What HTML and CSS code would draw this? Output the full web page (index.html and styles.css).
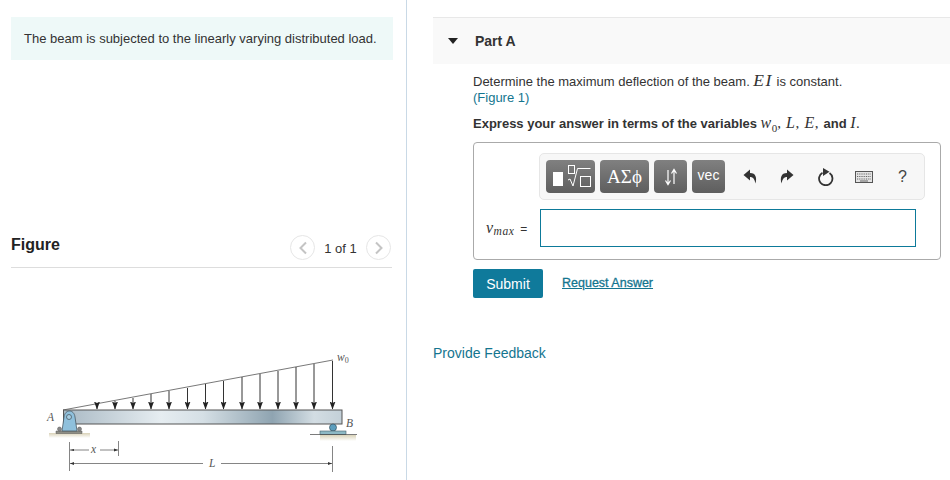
FILE: index.html
```html
<!DOCTYPE html>
<html lang="en">
<head>
  <meta charset="UTF-8">
  <title>Part A</title>
  <link rel="stylesheet" href="styles.css">
</head>
<body>
  <div class="page">
    <div class="left">
      <div class="intro">The beam is subjected to the linearly varying distributed load.</div>

      <div class="figure-head">
        <h2>Figure</h2>
        <div class="pager">
          <span class="round">
            <svg width="10" height="14" viewBox="0 0 10 14"><path d="M8 1.500 2.500 7 8 12.500" fill="none" stroke="#c4c4c4" stroke-width="2"/></svg>
          </span>
          <span class="pager-text">1 of 1</span>
          <span class="round">
            <svg width="10" height="14" viewBox="0 0 10 14"><path d="M2 1.500 7.500 7 2 12.500" fill="none" stroke="#c4c4c4" stroke-width="2"/></svg>
          </span>
        </div>
      </div>

      <svg class="beam" width="382" height="140" viewBox="11 340 382 140">
        <defs>
          <linearGradient id="steel" x1="0" x2="1" y1="0" y2="0">
            <stop offset="0" stop-color="#a9b9c4"/>
            <stop offset="0.35" stop-color="#e6edf1"/>
            <stop offset="0.5" stop-color="#d5dfe5"/>
            <stop offset="0.75" stop-color="#8fa4b1"/>
            <stop offset="0.9" stop-color="#d3dde3"/>
            <stop offset="1" stop-color="#c3d0d8"/>
          </linearGradient>
          <linearGradient id="ground" x1="0" x2="0" y1="0" y2="1">
            <stop offset="0" stop-color="#d9d2b8"/>
            <stop offset="1" stop-color="#ffffff"/>
          </linearGradient>
          <marker id="head" markerWidth="6" markerHeight="8" refX="3" refY="7.500" orient="0" markerUnits="userSpaceOnUse">
            <path d="M0 0 3 1.500 6 0 3 8z" fill="#222"/>
          </marker>
        </defs>

        <!-- load -->
        <path d="M63 410 333 360" fill="none" stroke="#555" stroke-width="0.800"/>
        <g stroke="#333" stroke-width="1" marker-end="url(#head)">
          <path d="M97 404V409"/>
          <path d="M115 401V409"/>
          <path d="M133 398V409"/>
          <path d="M151 394V409"/>
          <path d="M169 391V409"/>
          <path d="M187.500 388V409"/>
          <path d="M205.500 384V409"/>
          <path d="M223.500 381V409"/>
          <path d="M242 377V409"/>
          <path d="M260 374V409"/>
          <path d="M278 371V409"/>
          <path d="M296 367V409"/>
          <path d="M314 364V409"/>
          <path d="M332.500 361V409"/>
        </g>

        <!-- beam -->
        <rect x="63.500" y="410" width="278.500" height="14" fill="url(#steel)" stroke="#555" stroke-width="1"/>

        <!-- pin at A -->
        <rect x="49" y="433" width="41" height="5" fill="url(#ground)"/>
        <path d="M56 431H82V433.500H56z" fill="#8d8d85" stroke="#555" stroke-width="0.500"/>
        <circle cx="59.500" cy="429" r="2" fill="#888" stroke="#555" stroke-width="0.500"/>
        <circle cx="79.500" cy="429" r="2" fill="#888" stroke="#555" stroke-width="0.500"/>
        <path d="M62 431 64 417C65 409 74 409 75 417L77 431z" fill="#8fc0dc" stroke="#4a5a66" stroke-width="0.800"/>
        <circle cx="69" cy="417" r="2.500" fill="#a8cfe3" stroke="#4a5a66" stroke-width="0.800"/>

        <!-- roller at B -->
        <rect x="320" y="435" width="36" height="6" fill="url(#ground)"/>
        <circle cx="333" cy="427.500" r="3.500" fill="#5b9dbd" stroke="#33505f" stroke-width="0.700"/>
        <rect x="320" y="431" width="26" height="3.500" fill="#8db9c5" stroke="#46606a" stroke-width="0.600"/>
        <path d="M310 434.500H357" stroke="#444" stroke-width="0.700"/>

        <!-- dimensions -->
        <g stroke="#666" stroke-width="0.800" fill="none">
          <path d="M69.500 442V471"/>
          <path d="M118.500 441V456"/>
          <path d="M332.500 446V472"/>
          <path d="M70 450H89"/>
          <path d="M100 450H118"/>
          <path d="M70 463.500H203"/>
          <path d="M221 463.500H332"/>
        </g>
        <path d="M70 450 74 449 74 451zM118 450 114 448.500 114 451.500zM70 463.500 74 462 74 465zM332 463.500 328 462 328 465z" fill="#333"/>

        <g class="fig-label">
          <text x="47" y="421">A</text>
          <text x="346" y="427">B</text>
          <text x="91" y="453">x</text>
          <text x="209" y="467">L</text>
          <text x="337" y="361">w<tspan class="fig-sub" dy="2">0</tspan></text>
        </g>
      </svg>
    </div>

    <div class="right">
      <div class="part-head">
        <span class="caret"></span>
        <span class="part-title">Part A</span>
      </div>

      <div class="part-body">
        <p class="question">Determine the maximum deflection of the beam. <span class="math big">EI</span> is constant.<br><a href="#">(Figure 1)</a></p>
        <p class="express">Express your answer in terms of the variables <span class="math">w</span><sub class="math-sub">0</sub><span class="math-up">,</span> <span class="math">L</span><span class="math-up">,</span> <span class="math">E</span><span class="math-up">,</span> and <span class="math">I</span><span class="math-up">.</span></p>

        <div class="answer">
          <div class="toolbar">
            <div class="tool tool-root">
              <svg width="49" height="33" viewBox="0 0 49 33">
                <rect x="7" y="12" width="10" height="14" fill="#fff"/>
                <rect x="22.500" y="5.500" width="6" height="8" fill="none" stroke="#fff" stroke-width="1"/>
                <path d="M22 20 24 19 27 26 31.500 8.500H44.500" fill="none" stroke="#fff" stroke-width="1"/>
                <rect x="34.500" y="16.500" width="10" height="10" fill="none" stroke="#fff" stroke-width="1"/>
              </svg>
            </div>
            <div class="tool tool-greek">ΑΣϕ</div>
            <div class="tool tool-small">
              <svg width="16" height="18" viewBox="0 0 16 18">
                <path d="M5 2V16M2.500 12.500 5 16.500 7.500 12.500M11 16V1.500M8.500 5.500 11 1.500 13.500 5.500" fill="none" stroke="#fff" stroke-width="1.200"/>
              </svg>
            </div>
            <div class="tool tool-small tool-vec">vec</div>

            <div class="actions">
              <svg class="act" width="14" height="15" viewBox="0 0 14 15"><path d="M7 0.500 0.500 6 7 11.500V8C10 8 11.500 10 12.500 14.500 14 9 13 4 7 4z" fill="#333"/></svg>
              <svg class="act" width="14" height="15" viewBox="0 0 14 15"><path d="M7 0.500 13.500 6 7 11.500V8C4 8 2.500 10 1.500 14.500 0 9 1 4 7 4z" fill="#333"/></svg>
              <svg class="act" width="18" height="18" viewBox="0 0 18 18"><path d="M12.500 5A6.700 6.700 0 1 1 5.500 4.700" fill="none" stroke="#333" stroke-width="1.800"/><path d="M6 0 12.500 3.800 6 8z" fill="#333"/></svg>
              <svg class="act" width="18" height="12" viewBox="0 0 18 12">
                <rect x="0.500" y="0.500" width="17" height="11" fill="#e4e4e4" stroke="#555"/>
                <path d="M2 3H16M2 5.500H16M2 8H16" stroke="#666" stroke-width="1.200" stroke-dasharray="1 0.800"/>
                <path d="M5 10H13" stroke="#666"/>
              </svg>
              <span class="help">?</span>
            </div>
          </div>

          <div class="answer-row">
            <span class="var"><span class="math">v</span><span class="math var-sub">max</span><span class="equals">=</span></span>
            <input class="answer-input" type="text">
          </div>
        </div>

        <div class="buttons">
          <button class="submit">Submit</button>
          <a class="request" href="#">Request Answer</a>
        </div>
      </div>

      <a class="feedback" href="#">Provide Feedback</a>
    </div>
  </div>
</body>
</html>
```

FILE: styles.css
```css
html, body {
  margin: 0;
  height: 100%;
  overflow: hidden;
}

body {
  font-family: "Liberation Sans", Arial, sans-serif;
  font-size: 13px;
  color: #333;
  background: #fff;
}

a {
  color: #14758f;
  text-decoration: none;
}

.page {
  display: flex;
  height: 480px;
}

.left {
  box-sizing: border-box;
  width: 407px;
  padding: 17px 13px 0 11px;
  border-right: 1px solid #c9d9e6;
}

.intro {
  box-sizing: border-box;
  height: 43px;
  padding: 14px 13px 0;
  background: #eef9f8;
  line-height: 15px;
  white-space: nowrap;
}

.figure-head {
  display: flex;
  justify-content: space-between;
  align-items: center;
  height: 32px;
  margin: 175px 1px 0 0;
  border-bottom: 1px solid #ddd;
}

.figure-head h2 {
  margin: -13px 0 0;
  font-size: 16px;
  font-weight: bold;
  color: #222;
}

.pager {
  display: flex;
  align-items: center;
  margin: -7px 1px 0 0;
}

.pager-text {
  width: 51px;
  padding-top: 2px;
  text-align: center;
  font-size: 13px;
}

.round {
  box-sizing: border-box;
  display: flex;
  align-items: center;
  justify-content: center;
  width: 25px;
  height: 25px;
  border: 1px solid #e6e6e6;
  border-radius: 50%;
}

.beam {
  display: block;
  margin-top: 72px;
}

.fig-label text {
  font-family: "Liberation Serif", serif;
  font-style: italic;
  font-size: 11.500px;
  fill: #555;
}

.fig-label .fig-sub {
  font-size: 8px;
  font-style: normal;
}

.right {
  flex: 1;
  padding-top: 17px;
  padding-left: 26px;
}

.part-head {
  display: flex;
  align-items: center;
  box-sizing: border-box;
  height: 47px;
  background: #f9f9f9;
  border-top: 1px solid #e8e8e8;
}

.caret {
  width: 0;
  height: 0;
  margin-left: 15px;
  border-left: 5.500px solid transparent;
  border-right: 5.500px solid transparent;
  border-top: 6px solid #222;
}

.part-title {
  margin-left: 17px;
  font-size: 14px;
  font-weight: bold;
  color: #333;
}

.part-body {
  padding-left: 40px;
}

.question {
  margin: 10px 0 0;
  line-height: 16px;
}

.express {
  margin: 10px 0 0;
  line-height: 16px;
  font-weight: bold;
}

.math {
  font-family: "Liberation Serif", serif;
  font-style: italic;
  font-weight: normal;
  font-size: 16px;
  letter-spacing: 0.5px;
  line-height: 0;
}

.math.big {
  font-size: 17.500px;
  letter-spacing: 1.500px;
}

.math-up {
  font-family: "Liberation Serif", serif;
  font-weight: normal;
  font-size: 15px;
  line-height: 0;
  margin-right: 1.500px;
}

.math-sub {
  font-family: "Liberation Serif", serif;
  font-weight: normal;
  font-size: 11px;
  line-height: 0;
}

.answer {
  box-sizing: border-box;
  width: 468px;
  height: 118px;
  margin-top: 10px;
  padding: 10px 9px 0 12px;
  border: 1px solid #aaa;
  border-radius: 4px;
}

.toolbar {
  box-sizing: border-box;
  display: flex;
  align-items: center;
  gap: 5px;
  width: 386px;
  height: 47px;
  margin-left: 53px;
  padding: 0 6px;
  background: #f7f7f7;
  border: 1px solid #e6e6e6;
  border-radius: 5px;
}

.tool {
  box-sizing: border-box;
  display: flex;
  align-items: center;
  justify-content: center;
  height: 33px;
  color: #fff;
  border-radius: 4px;
  background: linear-gradient(#808080, #5e5e5e);
}

.tool-root {
  width: 49px;
}

.tool-greek {
  width: 49px;
  font-family: "Liberation Serif", serif;
  font-size: 19px;
}

.tool-small {
  width: 33px;
}

.tool-vec {
  font-size: 14px;
  padding-bottom: 3px;
}

.actions {
  display: flex;
  align-items: center;
  margin-left: 13px;
}

.act {
  display: block;
  flex: none;
}

.act:nth-child(1) {
  margin-right: 23px;
}

.act:nth-child(2) {
  margin-right: 23px;
}

.act:nth-child(3) {
  margin-right: 20px;
}

.help {
  margin-left: 25px;
  font-size: 16px;
  color: #444;
}

.answer-row {
  display: flex;
  align-items: center;
  margin-top: 9px;
}

.var {
  width: 54px;
  white-space: nowrap;
}

.var-sub {
  font-size: 11.500px;
  position: relative;
  top: 2px;
}

.equals {
  margin-left: 6px;
  font-size: 12px;
}

.answer-input {
  box-sizing: border-box;
  width: 376px;
  height: 38px;
  margin: 0;
  padding: 0 6px;
  border: 1px solid #0d7a9a;
  border-radius: 0;
  outline: none;
}

.buttons {
  display: flex;
  align-items: center;
  margin-top: 9px;
}

.submit {
  width: 70px;
  height: 29px;
  padding: 0;
  border: none;
  border-radius: 2px;
  background: #0f7a9b;
  color: #fff;
  font-family: "Liberation Sans", Arial, sans-serif;
  font-size: 14px;
}

.request {
  margin: -2px 0 0 19px;
  font-size: 12.500px;
  text-decoration: underline;
  -webkit-text-stroke: 0.3px #14758f;
  color: #14758f;
}

.feedback {
  display: block;
  margin-top: 47px;
  font-size: 14px;
}
```
